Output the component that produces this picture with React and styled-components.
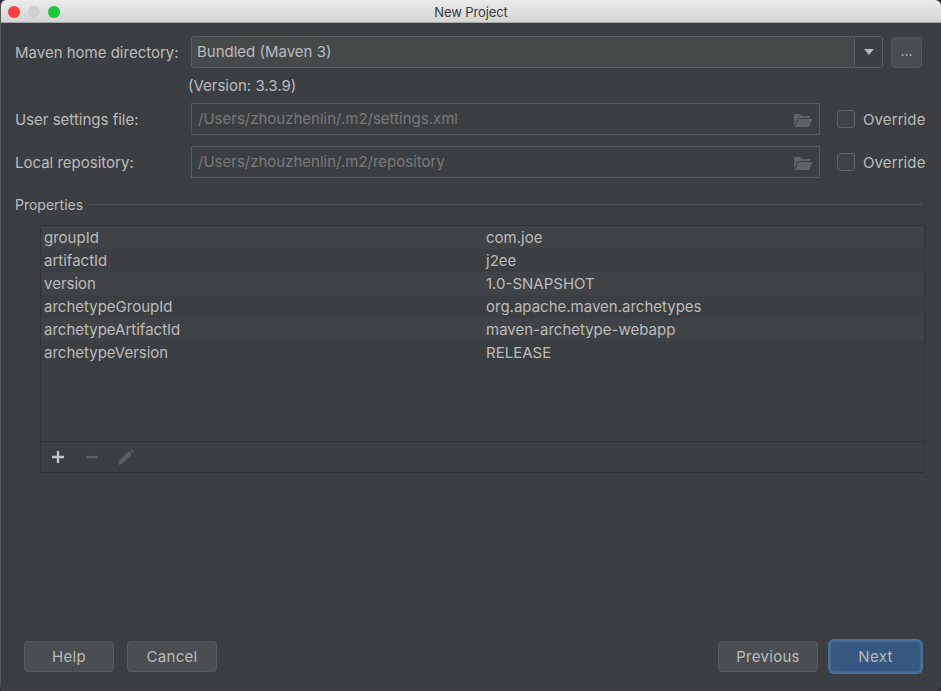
import React from "react";
import styled, { createGlobalStyle } from "styled-components";

const GlobalStyle = createGlobalStyle`
  html, body {
    margin: 0;
    padding: 0;
    height: 100%;
    background: #2a2b2c;
    overflow: hidden;
  }
  * {
    box-sizing: border-box;
  }
`;

const Window = styled.div`
  width: 941px;
  height: 691px;
  display: flex;
  flex-direction: column;
  overflow: hidden;
  border-radius: 6px;
  background: #3c3f41;
  font-family: Inter, "Liberation Sans", sans-serif;
  font-size: 15px;
  color: #bbbbbb;
  border-left: 1px solid #55585a;
`;

const TitleBar = styled.div`
  position: relative;
  height: 23px;
  flex: none;
  display: flex;
  align-items: center;
  justify-content: center;
  background: linear-gradient(#ebebeb, #d5d5d5);
  border-bottom: 1px solid #a8a8a8;
  color: #3a3a3a;
  font-size: 13px;
  letter-spacing: -0.1px;
  padding-top: 1px;
`;

const Lights = styled.div`
  position: absolute;
  left: 7px;
  top: 6px;
  display: flex;
  gap: 8px;
`;

const Light = styled.span`
  width: 12px;
  height: 12px;
  border-radius: 50%;
  background: ${(p) => p.$color};
`;

const Content = styled.div`
  flex: 1;
  display: flex;
  flex-direction: column;
  padding: 13px 16px 19px 14px;
`;

const Row = styled.div`
  display: flex;
  align-items: center;
  height: 32px;
  margin-bottom: ${(p) => p.$gap ?? 11}px;
`;

const Label = styled.label`
  width: 176px;
  flex: none;
`;

const Combo = styled.div`
  flex: 1;
  height: 32px;
  display: flex;
  align-items: center;
  background: #45494a;
  border: 1px solid #5a5d5f;
  border-radius: 3px;
  color: #bbbbbb;
  padding-left: 5px;
`;

const ComboText = styled.span`
  flex: 1;
  padding-bottom: 2px;
`;

const ComboArrow = styled.span`
  width: 28px;
  height: 30px;
  flex: none;
  display: flex;
  align-items: center;
  justify-content: center;
  background: #3c3f41;
  border-left: 1px solid #5a5d5f;
  border-radius: 0 2px 2px 0;

  &::after {
    content: "";
    border-left: 5px solid transparent;
    border-right: 5px solid transparent;
    border-top: 6px solid #b4b6b8;
  }
`;

const BrowseButton = styled.button`
  width: 31px;
  height: 31px;
  flex: none;
  margin: 0 3px 0 8px;
  padding: 0 0 2px;
  background: #4a4e50;
  border: 1px solid #54585a;
  border-radius: 4px;
  color: #bbbbbb;
  font: inherit;
  font-size: 14px;
  line-height: 1;
`;

const VersionNote = styled.div`
  margin-left: 173px;
  height: 35px;
  padding-top: 9px;
  line-height: 18px;
`;

const PathField = styled.div`
  width: 629px;
  height: 32px;
  flex: none;
  display: flex;
  align-items: center;
  justify-content: space-between;
  padding: 0 6px 2px 6px;
  border: 1px solid #56595b;
  color: #787878;
`;

const FolderIcon = styled.svg`
  width: 20px;
  height: 16px;
  margin-top: 3px;
  flex: none;
`;

const OverrideBox = styled.label`
  display: flex;
  align-items: center;
  gap: 8px;
  margin-left: 17px;
  white-space: nowrap;
  letter-spacing: 0.1px;
`;

const CheckBox = styled.span`
  width: 18px;
  height: 18px;
  flex: none;
  background: #3f4345;
  border: 1px solid #5f6365;
  border-radius: 3px;
`;

const SectionHead = styled.div`
  display: flex;
  align-items: center;
  gap: 6px;
  height: 18px;
  margin: 6px 3px 12px 0;
  font-size: 14px;

  &::after {
    content: "";
    flex: 1;
    height: 1px;
    background: #515456;
  }
`;

const TableBox = styled.div`
  margin-left: 25px;
  height: 248px;
  flex: none;
  display: flex;
  flex-direction: column;
  border: 1px solid #313335;
`;

const TableBody = styled.div`
  flex: 1;
`;

const PropRow = styled.div`
  display: grid;
  grid-template-columns: 442px 1fr;
  height: 23px;
  align-items: center;
  padding-left: 3px;
  background: ${(p) => (p.$odd ? "#404345" : "#3c3f41")};
`;

const ToolStrip = styled.div`
  height: 31px;
  flex: none;
  display: flex;
  align-items: center;
  gap: 14px;
  padding-left: 7px;
  border-top: 1px solid #313335;
`;

const ToolIcon = styled.svg`
  width: 20px;
  height: 20px;
  flex: none;
`;

const Footer = styled.div`
  margin-top: auto;
  display: flex;
  align-items: center;
  padding: 0 4px 0 9px;
`;

const DialogButton = styled.button`
  width: ${(p) => p.$width}px;
  height: 31px;
  margin-left: ${(p) => p.$offset || 0}px;
  background: ${(p) => (p.$primary ? "#365880" : "#4a4e50")};
  border: 1px solid ${(p) => (p.$primary ? "#43688c" : "#565a5c")};
  border-radius: 4px;
  box-shadow: ${(p) => (p.$primary ? "0 0 0 2px #46709c" : "none")};
  color: #bbbbbb;
  font: inherit;
  letter-spacing: 0.3px;
  padding: 0;
`;

const Spacer = styled.div`
  flex: 1;
`;

const rows = [
  ["groupId", "com.joe"],
  ["artifactId", "j2ee"],
  ["version", "1.0-SNAPSHOT"],
  ["archetypeGroupId", "org.apache.maven.archetypes"],
  ["archetypeArtifactId", "maven-archetype-webapp"],
  ["archetypeVersion", "RELEASE"],
];

const Folder = () => (
  <FolderIcon viewBox="0 0 20 16">
    <path d="M1 14V2h6l2 2h8v2H5L1 14z" fill="#5d6366" />
    <path d="M5.5 7H19.5L16 15H2z" fill="#5d6366" />
  </FolderIcon>
);

const App = () => {
  return (
    <Window>
      <GlobalStyle />
      <TitleBar>
        <Lights>
          <Light $color="#fc3d39" />
          <Light $color="#cfcfcf" />
          <Light $color="#1ac73a" />
        </Lights>
        New Project
      </TitleBar>
      <Content>
        <Row $gap={0}>
          <Label>Maven home directory:</Label>
          <Combo>
            <ComboText>Bundled (Maven 3)</ComboText>
            <ComboArrow />
          </Combo>
          <BrowseButton>...</BrowseButton>
        </Row>
        <VersionNote>(Version: 3.3.9)</VersionNote>
        <Row>
          <Label>User settings file:</Label>
          <PathField>
            /Users/zhouzhenlin/.m2/settings.xml
            <Folder />
          </PathField>
          <OverrideBox>
            <CheckBox />
            Override
          </OverrideBox>
        </Row>
        <Row>
          <Label>Local repository:</Label>
          <PathField>
            /Users/zhouzhenlin/.m2/repository
            <Folder />
          </PathField>
          <OverrideBox>
            <CheckBox />
            Override
          </OverrideBox>
        </Row>
        <SectionHead>Properties</SectionHead>
        <TableBox>
          <TableBody>
            {rows.map(([key, value], i) => (
              <PropRow key={key} $odd={i % 2 === 0}>
                <span>{key}</span>
                <span>{value}</span>
              </PropRow>
            ))}
          </TableBody>
          <ToolStrip>
            <ToolIcon viewBox="0 0 20 20">
              <path d="M10 4v12M4 10h12" stroke="#c3c6c9" strokeWidth="2.4" />
            </ToolIcon>
            <ToolIcon viewBox="0 0 20 20">
              <path d="M4 10h12" stroke="#5b5e60" strokeWidth="2.4" />
            </ToolIcon>
            <ToolIcon viewBox="0 0 20 20">
              <path d="M2.5 18l.5-4L13 4l3 3L6 17z" fill="#5b5e60" />
              <path d="M14.2 2.8l1-1 3 3-1 1z" fill="#5b5e60" />
            </ToolIcon>
          </ToolStrip>
        </TableBox>
        <Footer>
          <DialogButton $width={90}>Help</DialogButton>
          <DialogButton $width={90} $offset={13}>Cancel</DialogButton>
          <Spacer />
          <DialogButton $width={100}>Previous</DialogButton>
          <DialogButton $width={91} $offset={12} $primary>Next</DialogButton>
        </Footer>
      </Content>
    </Window>
  );
};

export default App;
